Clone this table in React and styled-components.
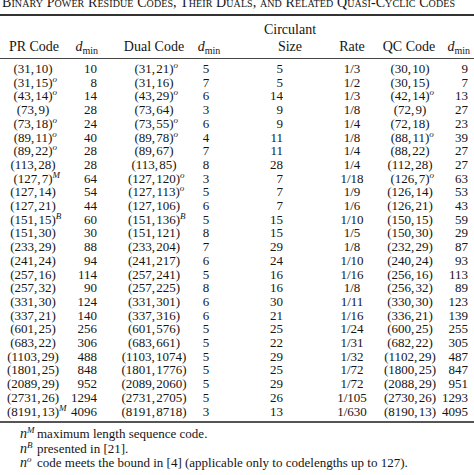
import React from 'react';
import styled, { createGlobalStyle } from 'styled-components';

const GlobalStyle = createGlobalStyle`
  html, body {
    margin: 0;
    padding: 0;
    background: #fff;
  }
  body {
    font-family: "Liberation Serif", "Times New Roman", serif;
    color: #151515;
    overflow: hidden;
  }
`;

const Page = styled.div`
  width: 474px;
  height: 475px;
  overflow: hidden;
`;

const Title = styled.div`
  margin-top: -5px;
  height: 21px;
  padding-left: 2px;
  font-size: 14px;
  font-variant: small-caps;
  letter-spacing: 0.1px;
  white-space: nowrap;
  border-bottom: 2px solid #333;
  box-sizing: border-box;
`;

const Table = styled.table`
  width: 474px;
  border-collapse: collapse;
  table-layout: fixed;
  font-size: 13px;
`;

const Head = styled.th`
  font-weight: normal;
  font-size: 14px;
  line-height: 17px;
  padding: 0 ${(p) => p.$pr || 0}px 3px ${(p) => p.$pl || 0}px;
  text-align: ${(p) => p.$align || 'center'};
  vertical-align: bottom;
  white-space: nowrap;
  border-bottom: 1px solid #444;
  height: 39px;
`;

const Cell = styled.td`
  padding: 0 ${(p) => p.$pr || 0}px 0 ${(p) => p.$pl || 0}px;
  text-align: ${(p) => p.$align || 'center'};
  line-height: 13.7px;
  height: 13.7px;
  white-space: nowrap;
`;

const FirstRow = styled.tr`
  td {
    padding-top: 3px;
  }
`;

const Sup = styled.sup`
  display: inline-block;
  width: 0;
  font-style: italic;
  font-size: 9px;
  line-height: 0;
  vertical-align: 5px;
`;

const D = styled.span`
  font-style: italic;
  font-size: 14px;
`;

const Sub = styled.sub`
  font-size: 10px;
  line-height: 0;
  vertical-align: -3px;
`;

const BottomRule = styled.div`
  margin-top: 3px;
  border-top: 2px solid #555;
`;

const Notes = styled.div`
  padding: 4px 0 0 20px;
  font-size: 13px;
`;

const Note = styled.div`
  display: flex;
  line-height: 14.5px;
`;

const NoteKey = styled.span`
  width: 17px;
  font-style: italic;
  font-size: 14px;
  sup {
    font-size: 9px;
    vertical-align: 5px;
    line-height: 0;
  }
`;

const Dmin = () => (
  <>
    <D>d</D>
    <Sub>min</Sub>
  </>
);

const rows = [
  ['(31,10)', '', 10, '(31,21)', 'o', 5, 5, '1/3', '(30,10)', '', 9],
  ['(31,15)', 'o', 8, '(31,16)', '', 7, 5, '1/2', '(30,15)', '', 7],
  ['(43,14)', 'o', 14, '(43,29)', 'o', 6, 14, '1/3', '(42,14)', 'o', 13],
  ['(73,9)', '', 28, '(73,64)', '', 3, 9, '1/8', '(72,9)', '', 27],
  ['(73,18)', 'o', 24, '(73,55)', 'o', 6, 9, '1/4', '(72,18)', '', 23],
  ['(89,11)', 'o', 40, '(89,78)', 'o', 4, 11, '1/8', '(88,11)', 'o', 39],
  ['(89,22)', 'o', 28, '(89,67)', '', 7, 11, '1/4', '(88,22)', '', 27],
  ['(113,28)', '', 28, '(113,85)', '', 8, 28, '1/4', '(112,28)', '', 27],
  ['(127,7)', 'M', 64, '(127,120)', 'o', 3, 7, '1/18', '(126,7)', 'o', 63],
  ['(127,14)', '', 54, '(127,113)', 'o', 5, 7, '1/9', '(126,14)', '', 53],
  ['(127,21)', '', 44, '(127,106)', '', 6, 7, '1/6', '(126,21)', '', 43],
  ['(151,15)', 'B', 60, '(151,136)', 'B', 5, 15, '1/10', '(150,15)', '', 59],
  ['(151,30)', '', 30, '(151,121)', '', 8, 15, '1/5', '(150,30)', '', 29],
  ['(233,29)', '', 88, '(233,204)', '', 7, 29, '1/8', '(232,29)', '', 87],
  ['(241,24)', '', 94, '(241,217)', '', 6, 24, '1/10', '(240,24)', '', 93],
  ['(257,16)', '', 114, '(257,241)', '', 5, 16, '1/16', '(256,16)', '', 113],
  ['(257,32)', '', 90, '(257,225)', '', 8, 16, '1/8', '(256,32)', '', 89],
  ['(331,30)', '', 124, '(331,301)', '', 6, 30, '1/11', '(330,30)', '', 123],
  ['(337,21)', '', 140, '(337,316)', '', 6, 21, '1/16', '(336,21)', '', 139],
  ['(601,25)', '', 256, '(601,576)', '', 5, 25, '1/24', '(600,25)', '', 255],
  ['(683,22)', '', 306, '(683,661)', '', 5, 22, '1/31', '(682,22)', '', 305],
  ['(1103,29)', '', 488, '(1103,1074)', '', 5, 29, '1/32', '(1102,29)', '', 487],
  ['(1801,25)', '', 848, '(1801,1776)', '', 5, 25, '1/72', '(1800,25)', '', 847],
  ['(2089,29)', '', 952, '(2089,2060)', '', 5, 29, '1/72', '(2088,29)', '', 951],
  ['(2731,26)', '', 1294, '(2731,2705)', '', 5, 26, '1/105', '(2730,26)', '', 1293],
  ['(8191,13)', 'M', 4096, '(8191,8718)', '', 3, 13, '1/630', '(8190,13)', '', 4095],
];

// the scan sets a very small space after each comma
const Code = ({ text, mark }) => (
  <>
    {text.replace(',', ',\u200A')}
    {mark && <Sup>{mark}</Sup>}
  </>
);

export default function App() {
  return (
    <Page>
      <GlobalStyle />
      <Title>Binary Power Residue Codes, Their Duals, and Related Quasi-Cyclic Codes</Title>
      <Table>
        <colgroup>
          <col style={{ width: 66 }} />
          <col style={{ width: 34 }} />
          <col style={{ width: 92 }} />
          <col style={{ width: 34 }} />
          <col style={{ width: 100 }} />
          <col style={{ width: 52 }} />
          <col style={{ width: 62 }} />
          <col style={{ width: 34 }} />
        </colgroup>
        <thead>
          <tr>
            <Head $pl={2}>PR Code</Head>
            <Head $align="right" $pr={2}>
              <Dmin />
            </Head>
            <Head $pl={16}>Dual Code</Head>
            <Head>
              <Dmin />
            </Head>
            <Head $pl={28}>
              Circulant
              <br />
              Size
            </Head>
            <Head>Rate</Head>
            <Head>QC Code</Head>
            <Head $align="right" $pr={4}>
              <Dmin />
            </Head>
          </tr>
        </thead>
        <tbody>
          {rows.map((r, i) => {
            const Row = i === 0 ? FirstRow : 'tr';
            return (
              <Row key={r[0]}>
                <Cell>
                  <Code text={r[0]} mark={r[1]} />
                </Cell>
                <Cell $align="right" $pr={3}>
                  {r[2]}
                </Cell>
                <Cell $pl={16}>
                  <Code text={r[3]} mark={r[4]} />
                </Cell>
                <Cell $pr={6}>{r[5]}</Cell>
                <Cell $align="right" $pr={43}>
                  {r[6]}
                </Cell>
                <Cell>{r[7]}</Cell>
                <Cell $pl={2}>
                  <Code text={r[8]} mark={r[9]} />
                </Cell>
                <Cell $align="right" $pr={6}>
                  {r[10]}
                </Cell>
              </Row>
            );
          })}
        </tbody>
      </Table>
      <BottomRule />
      <Notes>
        <Note>
          <NoteKey>
            n<sup>M</sup>
          </NoteKey>
          maximum length sequence code.
        </Note>
        <Note>
          <NoteKey>
            n<sup>B</sup>
          </NoteKey>
          presented in [21].
        </Note>
        <Note>
          <NoteKey>
            n<sup>o</sup>
          </NoteKey>
          code meets the bound in [4] (applicable only to codelengths up to 127).
        </Note>
      </Notes>
    </Page>
  );
}
